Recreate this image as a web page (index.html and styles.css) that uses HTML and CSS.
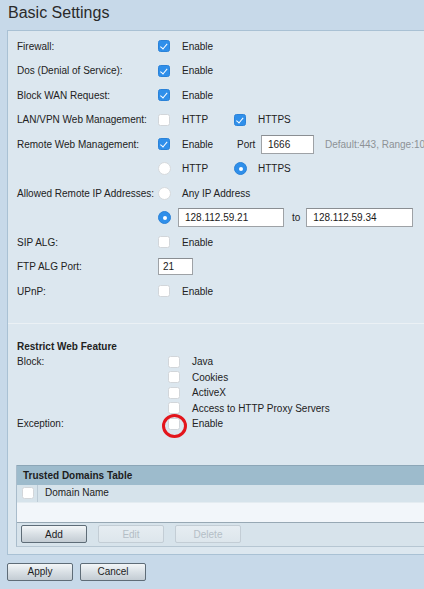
FILE: index.html
```html
<!DOCTYPE html>
<html>
<head>
<meta charset="utf-8">
<link rel="stylesheet" href="styles.css">
</head>
<body>
<div class="page">
  <h1 class="title">Basic Settings</h1>
  <div class="panel">
    <div class="rows">
      <div class="row"><div class="label">Firewall:</div><div class="ctrl"><span class="cb on"></span><span class="txt">Enable</span></div></div>
      <div class="row"><div class="label">Dos (Denial of Service):</div><div class="ctrl"><span class="cb on"></span><span class="txt">Enable</span></div></div>
      <div class="row"><div class="label">Block WAN Request:</div><div class="ctrl"><span class="cb on"></span><span class="txt">Enable</span></div></div>
      <div class="row"><div class="label">LAN/VPN Web Management:</div><div class="ctrl"><span class="cb"></span><span class="txt w52">HTTP</span><span class="cb on"></span><span class="txt">HTTPS</span></div></div>
      <div class="row"><div class="label">Remote Web Management:</div><div class="ctrl"><span class="cb on"></span><span class="txt w55">Enable</span><span class="txt w24">Port</span><span class="input w53">1666</span><span class="hint">Default:443, Range:1025-65535</span></div></div>
      <div class="row"><div class="label"></div><div class="ctrl"><span class="rd"></span><span class="txt w52">HTTP</span><span class="rd on"></span><span class="txt">HTTPS</span></div></div>
      <div class="row"><div class="label">Allowed Remote IP Addresses:</div><div class="ctrl"><span class="rd"></span><span class="txt">Any IP Address</span></div></div>
      <div class="row"><div class="label"></div><div class="ctrl"><span class="rd on short"></span><span class="input w106">128.112.59.21</span><span class="txt to">to</span><span class="input w107">128.112.59.34</span></div></div>
      <div class="row"><div class="label">SIP ALG:</div><div class="ctrl"><span class="cb"></span><span class="txt">Enable</span></div></div>
      <div class="row"><div class="label">FTP ALG Port:</div><div class="ctrl"><span class="input w35 small">21</span></div></div>
      <div class="row"><div class="label">UPnP:</div><div class="ctrl"><span class="cb"></span><span class="txt">Enable</span></div></div>
    </div>
    <div class="divider"></div>
    <div class="restrict">
      <div class="srow"><div class="slabel heading">Restrict Web Feature</div></div>
      <div class="srow"><div class="slabel">Block:</div><div class="ctrl"><span class="cb"></span><span class="txt">Java</span></div></div>
      <div class="srow"><div class="slabel"></div><div class="ctrl"><span class="cb"></span><span class="txt">Cookies</span></div></div>
      <div class="srow"><div class="slabel"></div><div class="ctrl"><span class="cb"></span><span class="txt">ActiveX</span></div></div>
      <div class="srow"><div class="slabel"></div><div class="ctrl"><span class="cb"></span><span class="txt">Access to HTTP Proxy Servers</span></div></div>
      <div class="srow"><div class="slabel">Exception:</div><div class="ctrl"><span class="cb marked"><span class="ring"></span></span><span class="txt">Enable</span></div></div>
    </div>
    <div class="table">
      <div class="thead">Trusted Domains Table</div>
      <div class="tcols"><div class="tcheck"><span class="cb"></span></div><div class="tname">Domain Name</div></div>
      <div class="tempty"></div>
      <div class="tbtns">
        <button class="btn">Add</button>
        <button class="btn off">Edit</button>
        <button class="btn off">Delete</button>
      </div>
    </div>
  </div>
  <div class="actions">
    <button class="btn">Apply</button>
    <button class="btn">Cancel</button>
  </div>
</div>
</body>
</html>
```
FILE: styles.css
```css
html, body {
  margin: 0;
  padding: 0;
  background: #c7d9e9;
  overflow: hidden;
}
body {
  font-family: "Liberation Sans", Arial, Helvetica, sans-serif;
  font-size: 10px;
  color: #222;
  width: 424px;
  height: 589px;
}
.page {
  padding-left: 7px;
  width: 620px;
}
.title {
  margin: 0;
  height: 30px;
  font-size: 16px;
  font-weight: normal;
  line-height: 25px;
  padding-left: 1px;
  color: #2a2a2a;
}
.panel {
  background: #dce7ef;
  border: 1px solid #a9c1d4;
  border-right: none;
  padding: 3px 0 7px 0;
}
.row {
  display: flex;
  align-items: center;
  height: 24.5px;
}
.label {
  width: 141px;
  padding-left: 9px;
  flex: none;
}
.ctrl {
  display: flex;
  align-items: center;
}
.cb {
  position: relative;
  display: inline-block;
  width: 10px;
  height: 10px;
  border-radius: 2.5px;
  background: #fff;
  border: 1px solid #d2d6da;
  margin-right: 12px;
  flex: none;
}
.cb.on {
  background: #2f8fea;
  border-color: #2a82d8;
}
.cb.on::after {
  content: "";
  position: absolute;
  left: 3.2px;
  top: 1px;
  width: 2.5px;
  height: 5.5px;
  border: solid #fff;
  border-width: 0 1.5px 1.5px 0;
  transform: rotate(40deg);
}
.rd {
  position: relative;
  display: inline-block;
  width: 11px;
  height: 11px;
  border-radius: 50%;
  background: #fff;
  border: 1px solid #d6dadd;
  margin-right: 11px;
  flex: none;
}
.rd.on {
  background: #2f8fea;
  border-color: #2a82d8;
}
.rd.on::after {
  content: "";
  position: absolute;
  left: 3.5px;
  top: 3.5px;
  width: 4px;
  height: 4px;
  border-radius: 50%;
  background: #fff;
}
.rd.short { margin-right: 7px; }
.txt { white-space: nowrap; }
.w52 { width: 52px; display: inline-block; }
.w55 { width: 55px; display: inline-block; }
.w24 { width: 24px; display: inline-block; }
.to { margin: 0 6px 0 8px; display: inline-block; }
.input {
  display: inline-block;
  box-sizing: border-box;
  height: 19px;
  line-height: 17px;
  background: #fff;
  border: 1px solid #9ea2a6;
  border-top-color: #8a8e92;
  padding-left: 6px;
  color: #1a1a1a;
}
.input.small { height: 17px; line-height: 15px; padding-left: 4px; }
.w53 { width: 53px; }
.w106 { width: 106px; }
.w107 { width: 107px; }
.w35 { width: 35px; }
.hint {
  margin-left: 11px;
  color: #8d9296;
  white-space: nowrap;
}
.divider {
  margin: 19px 0 0 0;
  height: 1px;
  background: #ebf1f5;
}
.restrict {
  margin-top: 15px;
}
.srow {
  display: flex;
  align-items: center;
  height: 15.5px;
}
.slabel {
  width: 151px;
  padding-left: 9px;
  flex: none;
}
.heading { font-weight: bold; }
.marked { position: relative; }
.ring {
  position: absolute;
  left: -7px;
  top: -5px;
  width: 19px;
  height: 18px;
  border: 3px solid #e3151c;
  border-radius: 50%;
}
.table {
  margin: 33px 0 0 8px;
  border-left: 1px solid #a9bccb;
  border-bottom: 1px solid #b6c6d2;
  background: #d7e3eb;
}
.thead {
  height: 19px;
  line-height: 20px;
  border-top: 1px solid #8ca6b7;
  background: #9dbbcc;
  font-weight: bold;
  padding-left: 6px;
  color: #1c1c1c;
}
.tcols {
  display: flex;
  height: 17px;
  background: #d6e3eb;
  align-items: stretch;
}
.tcheck {
  width: 21px;
  display: flex;
  align-items: center;
  padding-left: 5px;
  box-sizing: border-box;
  border-right: 1px solid #bccbd6;
}
.tcheck .cb { margin-right: 0; }
.tname {
  padding-left: 7px;
  line-height: 15px;
}
.tempty {
  height: 19px;
  background: #f2f6fa;
  border-top: 1px solid #e4ecf1;
  border-bottom: 1px solid #97a8b4;
}
.tbtns {
  height: 23px;
  display: flex;
  align-items: center;
  padding-left: 4px;
  gap: 11px;
}
.btn {
  box-sizing: border-box;
  width: 66px;
  height: 18px;
  padding: 0;
  font-family: "Liberation Sans", Arial, Helvetica, sans-serif;
  font-size: 10px;
  color: #1c1c1c;
  border: 1px solid #5e6c77;
  border-radius: 2px;
  background: linear-gradient(#f3f6f8, #d9e0e5 50%, #c3ccd3);
}
.btn.off {
  color: #b4bec6;
  border-color: #c3cdd5;
  background: linear-gradient(#e6edf2, #dde6ec);
}
.actions {
  display: flex;
  gap: 7px;
  margin-top: 8px;
}
.actions .btn { height: 18px; }
```
